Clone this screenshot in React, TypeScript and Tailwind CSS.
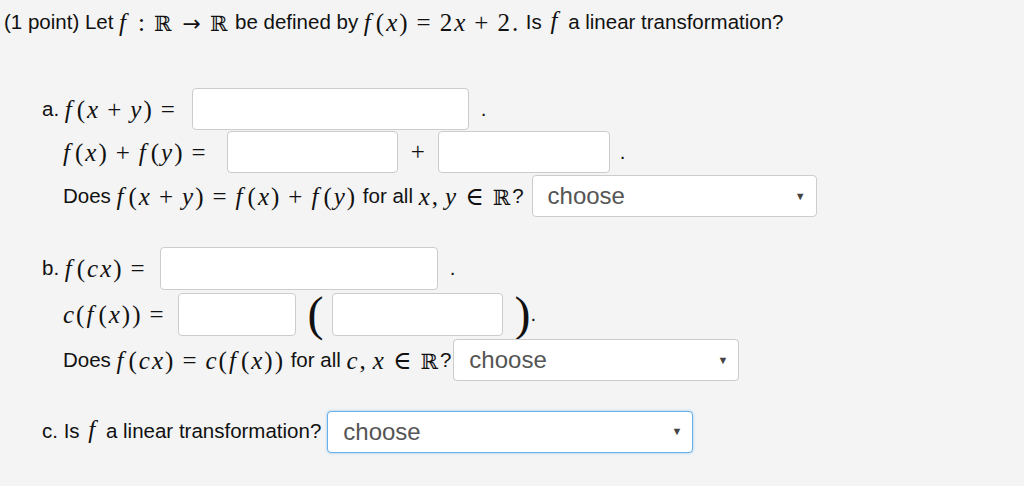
import React from 'react';

const mathFont = { fontFamily: '"Liberation Serif", "DejaVu Serif", serif' };

function M({ children }: { children: React.ReactNode }) {
  return (
    <span className="text-[25px] leading-none whitespace-nowrap tracking-[2px]" style={mathFont}>
      {children}
    </span>
  );
}

function V({ children }: { children: React.ReactNode }) {
  return <i className="italic">{children}</i>;
}

// italic f with a bit of room after it
function F() {
  return <i className="italic mr-[3px]">f</i>;
}

function R() {
  return (
    <span style={{ fontFamily: '"DejaVu Serif", serif' }} className="not-italic text-[21px]">
      ℝ
    </span>
  );
}

function Op({ children }: { children: React.ReactNode }) {
  return <span className="mx-[7px]">{children}</span>;
}

function Box({ w, h = 'h-[42px]' }: { w: string; h?: string }) {
  return <div className={`${h} ${w} shrink-0 rounded-[4px] border border-[#cccccc] bg-white`} />;
}

function Choose({ w, active = false }: { w: string; active?: boolean }) {
  return (
    <div
      className={`h-[42px] ${w} shrink-0 flex items-center justify-between rounded-[4px] bg-white pl-[15px] pr-[10px] ${
        active ? 'border border-[#66afe9] shadow-[0_0_3px_rgba(102,175,233,0.6)]' : 'border border-[#cccccc]'
      }`}
    >
      <span className="text-[24px] text-[#555555]">choose</span>
      <span className="text-[11px] text-[#444444]">▼</span>
    </div>
  );
}

const Big = ({ c }: { c: string }) => (
  <span className="text-[48px] leading-none font-light" style={mathFont}>
    {c}
  </span>
);

export default function App() {
  return (
    <div
      className="w-[1024px] h-[486px] bg-[#f4f4f4] text-[20.5px] text-[#111111] overflow-hidden"
      style={{ fontFamily: '"Liberation Sans", Arial, sans-serif' }}
    >
      <div className="pt-[8px] pl-[4px] h-[36px] flex items-center whitespace-nowrap">
        <span>(1 point) Let&nbsp;</span>
        <M>
          <F />
          <span className="mx-[7px]">:</span>
          <R />
          <span
            className="inline-block mx-[9px] text-[22px] tracking-normal"
            style={{ fontFamily: '"DejaVu Sans", sans-serif' }}
          >
            →
          </span>
          <R />
        </M>
        <span>&nbsp;be defined by&nbsp;</span>
        <M>
          <F />(<V>x</V>)<Op>=</Op>2<V>x</V>
          <Op>+</Op>2.
        </M>
        <span>&nbsp;Is&nbsp;</span>
        <span className="mx-[3px]">
          <M>
            <V>f</V>
          </M>
        </span>
        <span>&nbsp;a linear transformation?</span>
      </div>

      <div className="pl-[42px] mt-[52px]">
        <div className="h-[42px] flex items-center">
          <span>a.&nbsp;</span>
          <M>
            <F />(<V>x</V>
            <Op>+</Op>
            <V>y</V>)<Op>=</Op>
          </M>
          <div className="ml-[8px]">
            <Box w="w-[277px]" />
          </div>
          <span className="ml-[12px]">.</span>
        </div>
        <div className="pl-[21px] mt-[1px] h-[42px] flex items-center">
          <M>
            <F />(<V>x</V>)<Op>+</Op>
            <F />(<V>y</V>)<Op>=</Op>
          </M>
          <div className="ml-[12px]">
            <Box w="w-[171px]" />
          </div>
          <span className="mx-[13px] text-[25px]" style={mathFont}>
            +
          </span>
          <Box w="w-[172px]" />
          <span className="ml-[10px]">.</span>
        </div>
        <div className="pl-[21px] mt-[2px] h-[42px] flex items-center whitespace-nowrap">
          <span>Does&nbsp;</span>
          <M>
            <F />(<V>x</V>
            <Op>+</Op>
            <V>y</V>)<Op>=</Op>
            <F />(<V>x</V>)<Op>+</Op>
            <F />(<V>y</V>)
          </M>
          <span>&nbsp;for all&nbsp;</span>
          <M>
            <V>x</V>,<span className="ml-[5px]" />
            <V>y</V>
            <Op>∈</Op>
            <R />
          </M>
          <span>?</span>
          <div className="ml-[8px]">
            <Choose w="w-[285px]" />
          </div>
        </div>

        <div className="mt-[30px] h-[43px] flex items-center">
          <span>b.&nbsp;</span>
          <M>
            <F />(<V>cx</V>)<Op>=</Op>
          </M>
          <div className="ml-[6px]">
            <Box w="w-[278px]" h="h-[43px]" />
          </div>
          <span className="ml-[12px]">.</span>
        </div>
        <div className="pl-[21px] mt-[3px] h-[43px] flex items-center">
          <M>
            <V>c</V>(<F />(<V>x</V>))<Op>=</Op>
          </M>
          <div className="ml-[5px]">
            <Box w="w-[118px]" h="h-[43px]" />
          </div>
          <span className="ml-[12px] mr-[8px]">
            <Big c="(" />
          </span>
          <Box w="w-[171px]" h="h-[43px]" />
          <span className="ml-[12px]">
            <Big c=")" />
          </span>
          <span>.</span>
        </div>
        <div className="pl-[21px] mt-[3px] h-[42px] flex items-center whitespace-nowrap">
          <span>Does&nbsp;</span>
          <M>
            <F />(<V>cx</V>)<Op>=</Op>
            <V>c</V>(<F />(<V>x</V>))
          </M>
          <span>&nbsp;for all&nbsp;</span>
          <M>
            <V>c</V>,<span className="ml-[5px]" />
            <V>x</V>
            <Op>∈</Op>
            <R />
          </M>
          <span>?</span>
          <div className="ml-[2px]">
            <Choose w="w-[286px]" />
          </div>
        </div>

        <div className="mt-[29px] h-[43px] flex items-center whitespace-nowrap">
          <span>c. Is&nbsp;</span>
          <span className="mx-[3px]">
            <M>
              <V>f</V>
            </M>
          </span>
          <span>&nbsp;a linear transformation?</span>
          <div className="ml-[6px]">
            <Choose w="w-[366px]" active />
          </div>
        </div>
      </div>
    </div>
  );
}
